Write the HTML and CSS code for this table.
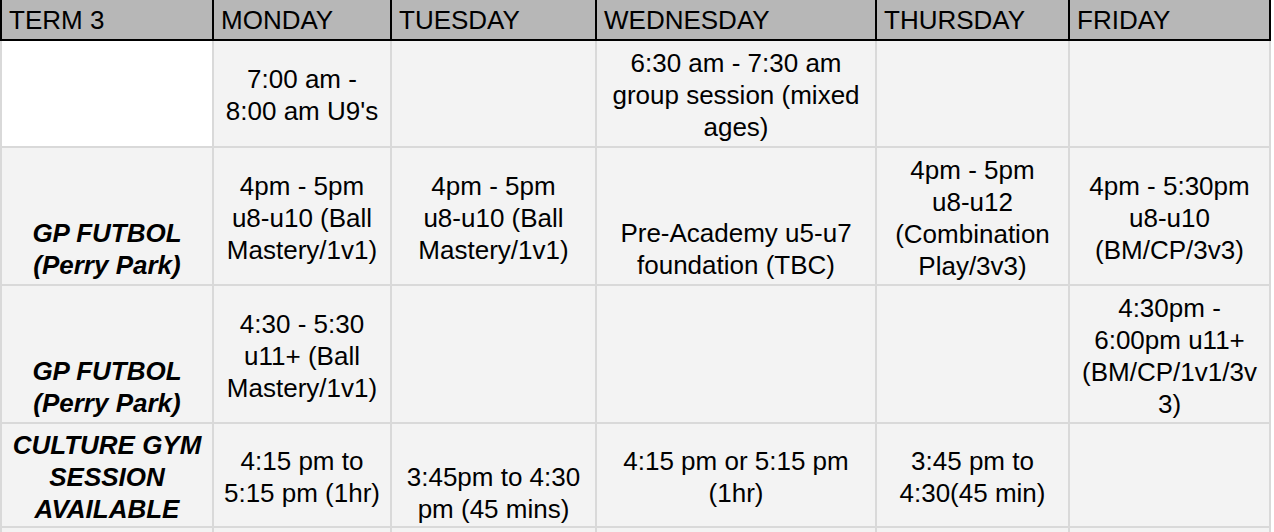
FILE: index.html
```html
<!DOCTYPE html>
<html>
<head>
<meta charset="utf-8">
<title>Term 3 Schedule</title>
<link rel="stylesheet" href="styles.css">
</head>
<body>
<div class="sheet">
  <div class="grid head">
    <div class="hcell">TERM 3</div>
    <div class="hcell">MONDAY</div>
    <div class="hcell">TUESDAY</div>
    <div class="hcell">WEDNESDAY</div>
    <div class="hcell">THURSDAY</div>
    <div class="hcell">FRIDAY</div>
  </div>
  <div class="grid body">
    <!-- row 1 -->
    <div class="cell white"></div>
    <div class="cell">7:00 am -<br>8:00 am U9's</div>
    <div class="cell"></div>
    <div class="cell">6:30 am - 7:30 am<br>group session (mixed<br>ages)</div>
    <div class="cell"></div>
    <div class="cell"></div>

    <!-- row 2 -->
    <div class="cell label bottom">GP FUTBOL<br>(Perry Park)</div>
    <div class="cell">4pm - 5pm<br>u8-u10 (Ball<br>Mastery/1v1)</div>
    <div class="cell">4pm - 5pm<br>u8-u10 (Ball<br>Mastery/1v1)</div>
    <div class="cell bottom">Pre-Academy u5-u7<br>foundation (TBC)</div>
    <div class="cell">4pm - 5pm<br>u8-u12<br>(Combination<br>Play/3v3)</div>
    <div class="cell">4pm - 5:30pm<br>u8-u10<br>(BM/CP/3v3)</div>

    <!-- row 3 -->
    <div class="cell label bottom">GP FUTBOL<br>(Perry Park)</div>
    <div class="cell">4:30 - 5:30<br>u11+ (Ball<br>Mastery/1v1)</div>
    <div class="cell"></div>
    <div class="cell"></div>
    <div class="cell"></div>
    <div class="cell">4:30pm -<br>6:00pm u11+<br>(BM/CP/1v1/3v<br>3)</div>

    <!-- row 4 -->
    <div class="cell label">CULTURE GYM<br>SESSION<br>AVAILABLE</div>
    <div class="cell">4:15 pm to<br>5:15 pm (1hr)</div>
    <div class="cell bottom tight">3:45pm to 4:30<br>pm (45 mins)</div>
    <div class="cell">4:15 pm or 5:15 pm<br>(1hr)</div>
    <div class="cell">3:45 pm to<br>4:30(45 min)</div>
    <div class="cell"></div>

    <!-- row 5 (partially visible) -->
    <div class="cell"></div>
    <div class="cell"></div>
    <div class="cell"></div>
    <div class="cell"></div>
    <div class="cell"></div>
    <div class="cell"></div>
  </div>
</div>
</body>
</html>
```

FILE: styles.css
```css
html, body {
  margin: 0;
  padding: 0;
  background: #ffffff;
}

body {
  font-family: "Liberation Sans", Arial, sans-serif;
  font-size: 26px;
  line-height: 32px;
  color: #000000;
  overflow: hidden;
}

.sheet {
  width: 1271px;
}

.grid {
  display: grid;
  grid-template-columns: 210px 176px 203px 278px 191px 199px;
  column-gap: 2px;
  row-gap: 2px;
  padding: 0 2px 2px 2px;
}

.head {
  background: #000000;
  grid-template-rows: 39px;
}

.hcell {
  background: #b7b7b7;
  padding-left: 7px;
  display: flex;
  align-items: center;
  white-space: nowrap;
  overflow: hidden;
}

.body {
  background: #d9d9d9;
  grid-template-rows: 105px 136px 136px 102px 4px;
  padding-bottom: 0;
}

.cell {
  background: #f3f3f3;
  display: flex;
  flex-direction: column;
  justify-content: center;
  text-align: center;
  padding: 3px 2px 0 2px;
  white-space: nowrap;
  overflow: hidden;
}

.cell.white {
  background: #ffffff;
}

.cell.bottom {
  justify-content: flex-end;
  padding-top: 0;
  padding-bottom: 3px;
}

.cell.bottom.tight {
  padding-bottom: 1px;
}

.cell.label {
  font-weight: bold;
  font-style: italic;
}
```
